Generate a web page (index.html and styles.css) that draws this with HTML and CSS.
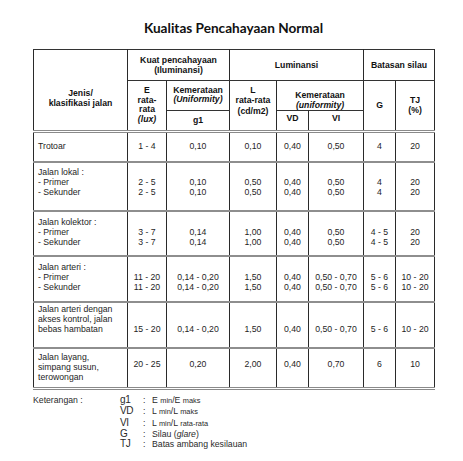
FILE: index.html
```html
<!DOCTYPE html>
<html lang="id">
<head>
<meta charset="utf-8">
<title>Kualitas Pencahayaan Normal</title>
<link rel="stylesheet" href="styles.css">
</head>
<body>
<div class="page">
  <h1 class="title">Kualitas Pencahayaan Normal</h1>
  <table class="lux">
    <colgroup>
      <col class="c-jenis"><col class="c-e"><col class="c-g1"><col class="c-l"><col class="c-vd"><col class="c-vi"><col class="c-g"><col class="c-tj">
    </colgroup>
    <thead>
      <tr class="h1">
        <th rowspan="3" class="h-jenis">Jenis/<br>klasifikasi jalan</th>
        <th colspan="2">Kuat pencahayaan<br>(Iluminansi)</th>
        <th colspan="3">Luminansi</th>
        <th colspan="2">Batasan silau</th>
      </tr>
      <tr class="h2">
        <th rowspan="2" class="h-e">E<br>rata-<br>rata<br><i>(lux)</i></th>
        <th class="h-kem">Kemerataan<br><i>(Uniformity)</i></th>
        <th rowspan="2" class="h-l">L<br>rata-rata<br>(cd/m2)</th>
        <th colspan="2" class="h-kem2">Kemerataan<br><i>(uniformity)</i></th>
        <th rowspan="2">G</th>
        <th rowspan="2">TJ<br>(%)</th>
      </tr>
      <tr class="h3">
        <th>g1</th>
        <th class="h-vd">VD</th>
        <th class="h-vd">VI</th>
      </tr>
    </thead>
    <tbody>
      <tr class="r1">
        <td class="name">Trotoar</td>
        <td>1 - 4</td><td>0,10</td><td>0,10</td><td>0,40</td><td>0,50</td><td>4</td><td>20</td>
      </tr>
      <tr class="r2">
        <td class="name">Jalan lokal :<br>- Primer<br>- Sekunder</td>
        <td>2 - 5<br>2 - 5</td><td>0,10<br>0,10</td><td>0,50<br>0,50</td><td>0,40<br>0,40</td><td>0,50<br>0,50</td><td>4<br>4</td><td>20<br>20</td>
      </tr>
      <tr class="r3">
        <td class="name">Jalan kolektor :<br>- Primer<br>- Sekunder</td>
        <td>3 - 7<br>3 - 7</td><td>0,14<br>0,14</td><td>1,00<br>1,00</td><td>0,40<br>0,40</td><td>0,50<br>0,50</td><td>4 - 5<br>4 - 5</td><td>20<br>20</td>
      </tr>
      <tr class="r4">
        <td class="name">Jalan arteri :<br>- Primer<br>- Sekunder</td>
        <td>11 - 20<br>11 - 20</td><td>0,14 - 0,20<br>0,14 - 0,20</td><td>1,50<br>1,50</td><td>0,40<br>0,40</td><td>0,50 - 0,70<br>0,50 - 0,70</td><td>5 - 6<br>5 - 6</td><td>10 - 20<br>10 - 20</td>
      </tr>
      <tr class="r5">
        <td class="name">Jalan arteri dengan<br>akses kontrol, jalan<br>bebas hambatan</td>
        <td>15 - 20</td><td>0,14 - 0,20</td><td>1,50</td><td>0,40</td><td>0,50 - 0,70</td><td>5 - 6</td><td>10 - 20</td>
      </tr>
      <tr class="r6">
        <td class="name">Jalan layang,<br>simpang susun,<br>terowongan</td>
        <td>20 - 25</td><td>0,20</td><td>2,00</td><td>0,40</td><td>0,70</td><td>6</td><td>10</td>
      </tr>
    </tbody>
  </table>
  <div class="notes">
    <div class="notes-label">Keterangan :</div>
    <div class="abbr">g1</div><div class="colon">:</div><div class="def">E <span class="sm">min</span>/E <span class="sm">maks</span></div>
    <div class="abbr">VD</div><div class="colon">:</div><div class="def">L <span class="sm">min</span>/L <span class="sm">maks</span></div>
    <div class="abbr">VI</div><div class="colon">:</div><div class="def">L <span class="sm">min</span>/L <span class="sm">rata-rata</span></div>
    <div class="abbr">G</div><div class="colon">:</div><div class="def">Silau (<i>glare</i>)</div>
    <div class="abbr">TJ</div><div class="colon">:</div><div class="def">Batas ambang kesilauan</div>
  </div>
</div>
</body>
</html>
```
FILE: styles.css
```css
html, body {
  margin: 0;
  padding: 0;
  background: #ffffff;
}

.page {
  padding: 18px 0 0 33px;
  width: 401px;
  font-family: "Liberation Sans", Arial, sans-serif;
  color: #1e1e1e;
}

.title {
  margin: 0;
  height: 31px;
  font-family: Lato, "Open Sans", sans-serif;
  font-weight: 700;
  font-size: 13.6px;
  line-height: 20px;
  text-align: center;
  color: #111;
}

.lux {
  border-collapse: collapse;
  table-layout: fixed;
  width: 401px;
  font-size: 8.7px;
  line-height: 10.2px;
  border-top: 1px solid #333;
  border-left: 1px solid #777;
  border-right: 1px solid #333;
  border-bottom: 3px double #8a8a8a;
}

.c-jenis { width: 94px; }
.c-e { width: 39px; }
.c-g1 { width: 63px; }
.c-l { width: 47px; }
.c-vd { width: 32px; }
.c-vi { width: 55px; }
.c-g { width: 32px; }
.c-tj { width: 39px; }

.lux th,
.lux td {
  padding: 0;
  text-align: center;
  border-left: 1px solid #2a2a2a;
  border-right: 1px solid #2a2a2a;
}

.lux th {
  font-weight: 700;
  color: #111;
  vertical-align: middle;
  border-top: 1px solid #333;
  border-bottom: 1px solid #333;
}

.lux thead tr:last-child th,
.lux .h-jenis,
.lux .h-e,
.lux .h-l,
.lux thead th[rowspan="2"] {
  border-bottom: 3px double #8a8a8a;
}

.h1 { height: 30.5px; }
.h2 { height: 30px; }
.h3 { height: 21px; }

.lux .h-jenis { padding-top: 17px; line-height: 10.7px; }
.lux .h-e { line-height: 9.5px; }
.lux .h-kem { line-height: 8.6px; }
.lux .h-l { vertical-align: top; padding-top: 4px; line-height: 10.6px; }
.lux .h-kem2 { vertical-align: bottom; line-height: 10px; }
.lux .h-vd { vertical-align: top; padding-top: 2px; }

.lux td {
  vertical-align: top;
  border-top: 2px solid #8e8e8e;
  border-bottom: 2px solid #8e8e8e;
}

.lux tbody tr:last-child td { border-bottom: 3px double #8a8a8a; }

.lux td.name {
  text-align: left;
  padding-left: 4px;
}

.r1 { height: 30.5px; }
.r2 { height: 49.5px; }
.r3 { height: 45px; }
.r4 { height: 45.5px; }
.r5 { height: 46.5px; }
.r6 { height: 40.5px; }

.r1 td { vertical-align: middle; }
.r2 td, .r3 td, .r4 td { padding-top: 4.5px; }
.r2 td:not(.name), .r3 td:not(.name), .r4 td:not(.name) { padding-top: 14.7px; }
.r5 td { padding-top: 1px; }
.r5 td:not(.name) { padding-top: 21px; }
.r6 td { padding-top: 3px; }
.r6 td:not(.name) { padding-top: 10px; }

.notes {
  display: grid;
  grid-template-columns: 87px 23px 9px auto;
  margin-top: 5px;
  font-size: 8.7px;
  line-height: 10.3px;
  color: #2a2a2a;
}

.notes-label {
  grid-row: 1 / span 5;
  grid-column: 1;
}

.abbr {
  grid-column: 2;
  font-size: 10px;
  letter-spacing: -0.3px;
}

.colon { grid-column: 3; }
.def { grid-column: 4; }

.sm { font-size: 7.4px; }
```
